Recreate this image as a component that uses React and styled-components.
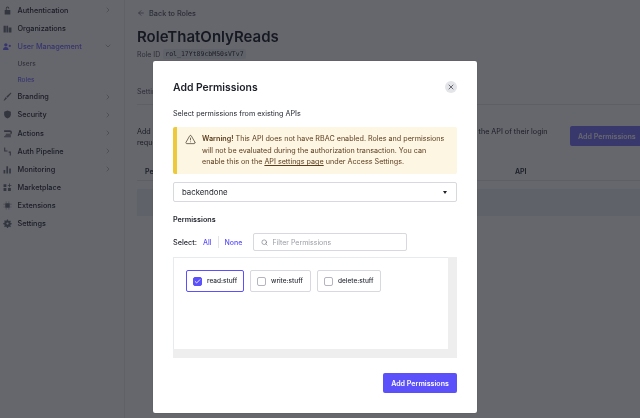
import React from "react";
import styled, { createGlobalStyle } from "styled-components";
import { ChevronRight, ChevronDown, ArrowLeft, X, Search, Check, TriangleAlert } from "lucide-react";

const GlobalStyle = createGlobalStyle`
  html, body { margin: 0; padding: 0; width: 640px; height: 418px; overflow: hidden; background: #fff; }
  * { box-sizing: border-box; }
  body { font-family: Inter, "Liberation Sans", sans-serif; color: #1e212a; }
`;

const Page = styled.div`
  position: relative;
  display: flex;
  width: 640px;
  height: 418px;
  overflow: hidden;
  filter: blur(0.3px);
`;

const Sidebar = styled.nav`
  flex: 0 0 125px;
  display: flex;
  flex-direction: column;
  padding-top: 1px;
  border-right: 1px solid #eceded;
`;

const NavRow = styled.div`
  display: flex;
  align-items: center;
  height: 18.2px;
  padding-left: 3px;
  font-size: 7.3px;
  font-weight: 500;
  color: ${(p) => (p.$active ? "#7a70ff" : "#2b2e38")};
  span { margin-left: 5.5px; flex: 1; }
  > svg:last-child { margin-right: 12px; color: #9a9ca5; }
`;

const IconSlot = styled.svg`
  width: 9px;
  height: 9px;
  flex: none;
  fill: currentColor;
  color: ${(p) => (p.$active ? "#7a70ff" : "#6f727c")};
`;

const SubRow = styled.div`
  height: 16px;
  padding: 1px 0 0 17.5px;
  display: flex;
  align-items: center;
  font-size: 6.5px;
  font-weight: 500;
  color: ${(p) => (p.$active ? "#7a70ff" : "#6b6e78")};
`;

const Main = styled.main`
  flex: none;
  width: 521px;
  padding: 6px 0 0 12px;
`;

const BackLink = styled.div`
  display: flex;
  align-items: center;
  gap: 4px;
  height: 14px;
  font-size: 7.3px;
  font-weight: 500;
  color: #5a5d68;
`;

const Title = styled.h1`
  margin: 6px 0 0;
  font-size: 15px;
  line-height: 22px;
  font-weight: 600;
  color: #1e212a;
`;

const RoleId = styled.div`
  display: flex;
  align-items: center;
  gap: 3px;
  height: 12px;
  font-size: 7px;
  color: #5a5d68;
  code {
    font-family: "DejaVu Sans Mono", "Liberation Mono", monospace;
    font-size: 6.5px;
    background: #eeeff2;
    border-radius: 2px;
    padding: 1px 2px;
    color: #2b2e38;
  }
`;

const Tabs = styled.div`
  margin-top: 20px;
  height: 25px;
  line-height: 24px;
  font-size: 7.2px;
  color: #5a5d68;
  border-bottom: 1px solid #e8e9ec;
`;

const DescRow = styled.div`
  display: flex;
  align-items: flex-start;
  justify-content: space-between;
  margin-top: 21px;
`;

const Desc = styled.p`
  margin: 0;
  width: 418px;
  font-size: 7.2px;
  line-height: 11px;
  color: #2b2e38;
`;

const GhostButton = styled.div`
  flex: none;
  width: 76px;
  height: 20px;
  padding-left: 8px;
  display: flex;
  align-items: center;
  font-size: 7.1px;
  font-weight: 600;
  color: #fff;
  background: #7f78ff;
  border-radius: 2px 0 0 2px;
  white-space: nowrap;
`;

const TableHead = styled.div`
  display: flex;
  margin-top: 14px;
  height: 19px;
  padding-left: 8px;
  align-items: center;
  font-size: 7px;
  font-weight: 600;
  color: #2b2e38;
  border-bottom: 1px solid #e8e9ec;
  span:first-child { width: 370px; }
`;

const TableRow = styled.div`
  margin-top: 8px;
  height: 27px;
  background: #eef0f4;
`;

const Overlay = styled.div`
  position: absolute;
  inset: 0;
  background: rgba(20, 22, 30, 0.65);
`;

const Modal = styled.section`
  position: absolute;
  left: 153px;
  top: 61px;
  width: 324px;
  height: 352px;
  padding: 17px 20px 0;
  display: flex;
  flex-direction: column;
  background: #fff;
  border-radius: 2px;
  box-shadow: 0 0 1px rgba(0, 0, 0, 0.4);
`;

const ModalHead = styled.header`
  display: flex;
  align-items: center;
  justify-content: space-between;
  height: 18px;
  h2 {
    margin: 0;
    font-size: 10.4px;
    font-weight: 600;
    color: #1e212a;
  }
`;

const CloseButton = styled.div`
  width: 12px;
  height: 12px;
  border-radius: 50%;
  background: #e4e5e9;
  display: flex;
  align-items: center;
  justify-content: center;
  color: #2b2e38;
`;

const Lead = styled.p`
  margin: 12px 0 0;
  height: 11px;
  font-size: 7.2px;
  line-height: 11px;
  color: #1e212a;
`;

const Alert = styled.div`
  display: flex;
  margin-top: 8px;
  flex: none;
  height: 47px;
  padding: 6px 10px 0 8px;
  background: #fdf6e3;
  border-left: 4px solid #efc93c;
  border-radius: 2px;
  font-size: 7.2px;
  line-height: 11.6px;
  color: #5c3d1e;
  svg { flex: none; margin: 1px 6px 0 0; color: #3b2f22; }
  b { font-weight: 600; }
  u { text-underline-offset: 1px; }
`;

const SelectBox = styled.div`
  display: flex;
  align-items: center;
  justify-content: space-between;
  flex: none;
  margin-top: 8px;
  height: 20px;
  padding: 0 9px 0 8px;
  border: 1px solid #d8d9de;
  border-radius: 2px;
  font-size: 7.8px;
  color: #1e212a;
  &::after {
    content: "";
    border: 2.5px solid transparent;
    border-top: 3px solid #1e212a;
    border-bottom: 0;
  }
`;

const Label = styled.div`
  margin-top: 12px;
  height: 11px;
  line-height: 11px;
  font-size: 7.2px;
  font-weight: 600;
  color: #1e212a;
`;

const FilterRow = styled.div`
  display: flex;
  align-items: center;
  margin-top: 8px;
  height: 18px;
  font-size: 7.3px;
  font-weight: 500;
  color: #2b2e38;
`;

const LinkText = styled.span`
  font-size: 7px;
  color: #5b50fa;
  margin-left: ${(p) => p.$left || 0}px;
`;

const Divider = styled.i`
  width: 1px;
  height: 12px;
  margin: 0 6px;
  background: #e3e4e8;
`;

const SearchField = styled.div`
  display: flex;
  align-items: center;
  gap: 4px;
  width: 154px;
  height: 18px;
  margin-left: 11px;
  padding-left: 7px;
  border: 1px solid #d8d9de;
  border-radius: 2px;
  font-size: 7px;
  font-weight: 400;
  color: #9a9ca5;
  svg { color: #6b6e78; }
`;

const ScopeFrame = styled.div`
  flex: none;
  margin-top: 6px;
  height: 101px;
  padding: 0 9px 9px 0;
  background: #eeeeee;
`;

const ScopeList = styled.div`
  display: flex;
  align-items: flex-start;
  gap: 6px;
  height: 100%;
  padding: 13px 13px 0;
  background: #fff;
  box-shadow: inset 1px 1px 0 #e9eaed;
`;

const ScopeChip = styled.label`
  flex: none;
  display: flex;
  align-items: center;
  gap: 5.5px;
  height: 22px;
  width: ${(p) => p.$width}px;
  padding-left: 5.5px;
  border: 1px solid ${(p) => (p.$checked ? "#5b50fa" : "#d8d9de")};
  border-radius: 2px;
  font-size: 6.5px;
  font-weight: 500;
  color: #2b2e38;
`;

const CheckBox = styled.span`
  flex: none;
  width: 9px;
  height: 9px;
  display: flex;
  align-items: center;
  justify-content: center;
  border-radius: 2px;
  border: 1px solid ${(p) => (p.$checked ? "#5b50fa" : "#b4b6bd")};
  background: ${(p) => (p.$checked ? "#5b50fa" : "#fff")};
  color: #fff;
`;

const Footer = styled.footer`
  display: flex;
  justify-content: flex-end;
  margin-top: 15px;
`;

const PrimaryButton = styled.button`
  width: 74px;
  height: 20px;
  padding: 0;
  border: 0;
  border-radius: 2px;
  background: #5b50fa;
  color: #fff;
  font-family: inherit;
  font-size: 7.1px;
  font-weight: 600;
`;

const navTop = [
  ["Authentication", <path key="a" d="M3 7h10v8H3zM5 7V4a3 3 0 0 1 6 0v1H9.500V4a1.500 1.500 0 0 0-3 0v3z" />],
  ["Organizations", <path key="o" d="M1 3h4v12H1zM6 3h3v12H6zM10 6h5v9h-5z" />],
];

const navBottom = [
  ["Branding", <path key="b" d="M14 1l1 1-7 8-2-2zM5 9l2 2-4 4H1z" />, true],
  ["Security", <path key="s" d="M8 1l6 2v5c0 3.500-2.500 6-6 7-3.500-1-6-3.500-6-7V3z" />, true],
  ["Actions", <path key="c" d="M2 2h10a2 2 0 0 1 0 8H5v-1.500h7a.5.5 0 0 0 0-3H2zM4 10.500h10V12H4zM2 13h12v1.500H2z" />, true],
  ["Auth Pipeline", <path key="p" d="M2 1h2v5h4v2H2zM10 8h4v7h-2v-5h-2z" />, true],
  ["Monitoring", <path key="m" d="M1 9h3v6H1zM6 2h3v13H6zM11 6h3v9h-3z" />, true],
  ["Marketplace", <path key="k" d="M1 2h5v5H1zM1 9h5v5H1zM9 9h5v5H9zM11 1h1.500v2.500H15V5h-2.500v2.500H11V5H8.500V3.500H11z" />, false],
  ["Extensions", <path key="e" d="M4 4h8v8H4zM1 5h2v1H1zM1 10h2v1H1zM13 5h2v1h-2zM13 10h2v1h-2zM5 1h1v2H5zM10 1h1v2h-1zM5 13h1v2H5zM10 13h1v2h-1z" />, false],
  ["Settings", <path key="g" fillRule="evenodd" d="M7 1h2l.4 2 1.500.6 1.700-1.100 1.400 1.400-1.100 1.700.6 1.500 2 .4v2l-2 .4-.6 1.500 1.100 1.700-1.400 1.400-1.700-1.100-1.500.6-.4 2H7l-.4-2-1.500-.6-1.700 1.100-1.400-1.400 1.100-1.700-.6-1.500-2-.4V7l2-.4.6-1.500-1.100-1.700 1.400-1.400 1.700 1.100 1.500-.6zM8 6a2 2 0 1 0 0 4 2 2 0 0 0 0-4z" />, false],
];

const NavItem = ({ label, icon, chevron = true, active }) => (
  <NavRow $active={active}>
    <IconSlot $active={active} viewBox="0 0 16 16">{icon}</IconSlot>
    <span>{label}</span>
    {chevron && (active ? <ChevronDown size={8} /> : <ChevronRight size={8} />)}
  </NavRow>
);

const App = () => {
  const scopes = [
    { name: "read:stuff", width: 58, checked: true },
    { name: "write:stuff", width: 61 },
    { name: "delete:stuff", width: 64 },
  ];

  return (
    <>
      <GlobalStyle />
      <Page>
        <Sidebar>
          {navTop.map(([label, icon], i) => (
            <NavItem key={label} label={label} icon={icon} chevron={i === 0} />
          ))}
          <NavItem
            active
            label="User Management"
            icon={<path d="M5 2a3 3 0 1 1 0 6 3 3 0 0 1 0-6zM0 14c0-3 2-5 5-5s5 2 5 5zM12 5a2 2 0 1 1 0 4 2 2 0 0 1 0-4z" />}
          />
          <SubRow>Users</SubRow>
          <SubRow $active>Roles</SubRow>
          {navBottom.map(([label, icon, chevron]) => (
            <NavItem key={label} label={label} icon={icon} chevron={chevron} />
          ))}
        </Sidebar>

        <Main>
          <BackLink>
            <ArrowLeft size={8} />
            Back to Roles
          </BackLink>
          <Title>RoleThatOnlyReads</Title>
          <RoleId>
            Role ID <code>rol_17Yt89cbM50sVTv7</code>
          </RoleId>
          <Tabs>Settings</Tabs>
          <DescRow>
            <Desc>
              Add Permissions to this Role. Users who have this Role will receive all
              Permissions below that match the API of their login request.
            </Desc>
            <GhostButton>Add Permissions</GhostButton>
          </DescRow>
          <TableHead>
            <span>Permission</span>
            <span>API</span>
          </TableHead>
          <TableRow />
        </Main>

        <Overlay />

        <Modal>
          <ModalHead>
            <h2>Add Permissions</h2>
            <CloseButton>
              <X size={8} strokeWidth={2} />
            </CloseButton>
          </ModalHead>
          <Lead>Select permissions from existing APIs</Lead>
          <Alert>
            <TriangleAlert size={11} strokeWidth={1.5} />
            <div>
              <b>Warning!</b> This API does not have RBAC enabled. Roles and permissions
              will not be evaluated during the authorization transaction. You can enable
              this on the <u>API settings page</u> under Access Settings.
            </div>
          </Alert>
          <SelectBox>backendone</SelectBox>
          <Label>Permissions</Label>
          <FilterRow>
            Select:
            <LinkText $left={6}>All</LinkText>
            <Divider />
            <LinkText>None</LinkText>
            <SearchField>
              <Search size={7} />
              Filter Permissions
            </SearchField>
          </FilterRow>
          <ScopeFrame>
            <ScopeList>
              {scopes.map((scope) => (
                <ScopeChip key={scope.name} $width={scope.width} $checked={scope.checked}>
                  <CheckBox $checked={scope.checked}>
                    {scope.checked && <Check size={7} strokeWidth={3} />}
                  </CheckBox>
                  {scope.name}
                </ScopeChip>
              ))}
            </ScopeList>
          </ScopeFrame>
          <Footer>
            <PrimaryButton>Add Permissions</PrimaryButton>
          </Footer>
        </Modal>
      </Page>
    </>
  );
};

export default App;
